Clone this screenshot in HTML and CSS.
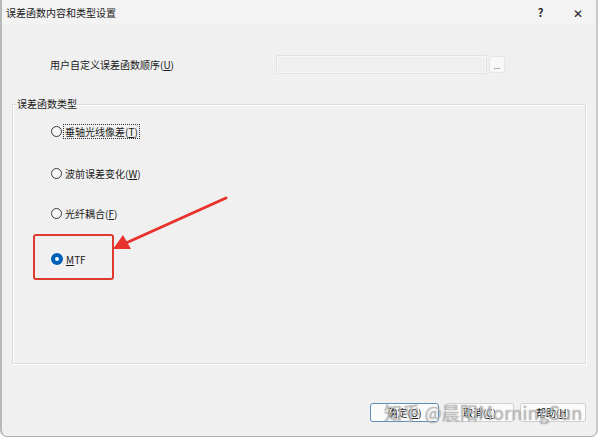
FILE: index.html
```html
<!DOCTYPE html>
<html lang="zh">
<head>
<meta charset="utf-8">
<link rel="stylesheet" href="styles.css">
</head>
<body>
<div class="window">
  <div class="titlebar">
    <span class="title">误差函数内容和类型设置</span>
    <span class="tb-btn help">?</span>
    <span class="tb-btn close">✕</span>
  </div>
  <div class="content">
    <div class="order-row">
      <span class="order-label">用户自定义误差函数顺序(<u>U</u>)</span>
      <span class="order-input"></span>
      <span class="dots-btn">...</span>
    </div>
    <fieldset class="group">
      <legend class="group-label">误差函数类型</legend>
      <div class="radio-list">
        <div class="radio-item"><span class="radio"></span><span class="radio-text focused">垂轴光线像差(<u>T</u>)</span></div>
        <div class="radio-item"><span class="radio"></span><span class="radio-text">波前误差变化(<u>W</u>)</span></div>
        <div class="radio-item third"><span class="radio"></span><span class="radio-text">光纤耦合(<u>F</u>)</span></div>
        <div class="radio-item last"><span class="radio checked"></span><span class="radio-text"><u>M</u>TF</span></div>
      </div>
    </fieldset>
    <div class="buttons">
      <span class="btn default">确定(<u>O</u>)</span>
      <span class="btn">取消(<u>C</u>)</span>
      <span class="btn">帮助(<u>H</u>)</span>
    </div>
  </div>
</div>
<div class="highlight"></div>
<svg class="arrow" width="600" height="441" viewBox="0 0 600 441">
  <line x1="226" y1="198" x2="126" y2="243" stroke="#e8322d" stroke-width="3" stroke-linecap="round"/>
  <polygon points="113,249 123,235 131,249" fill="#e8322d"/>
</svg>
<div class="watermark">知乎 @晨阳MorningSun</div>
</body>
</html>
```
FILE: styles.css
```css
html, body {
  margin: 0;
  padding: 0;
  width: 600px;
  height: 441px;
  overflow: hidden;
  background: #ffffff;
  font-family: "Noto Sans CJK SC", "Liberation Sans", sans-serif;
  font-size: 10px;
  color: #1a1a1a;
}

.window {
  box-sizing: border-box;
  width: 598px;
  height: 437px;
  background: #f0f0f0;
  border-left: 2px solid #b9b9b9;
  border-right: 2px solid #c8c8c8;
  border-bottom: 1px solid #b0b0b0;
  border-radius: 0 0 7px 7px;
  display: flex;
  flex-direction: column;
}

.titlebar {
  height: 24px;
  display: flex;
  align-items: center;
  background: #f3f3f3;
  padding-left: 4px;
}

.title {
  flex: 1;
  font-size: 10px;
  color: #1a1a1a;
}

.tb-btn {
  width: 37px;
  text-align: center;
  color: #222;
}

.help {
  font-size: 11px;
  font-weight: bold;
}

.close {
  font-size: 12px;
}

.content {
  flex: 1;
  display: flex;
  flex-direction: column;
  padding: 0 10px 0 10px;
}

.order-row {
  margin-top: 31px;
  height: 19px;
  display: flex;
  align-items: center;
}

.order-label {
  margin-left: 38px;
  width: 226px;
}

.order-input {
  box-sizing: border-box;
  width: 211px;
  height: 19px;
  background: #efefef;
  border: 1px solid #e2e2e2;
  box-shadow: inset 0 0 0 1px #f7f7f7;
}

.dots-btn {
  box-sizing: border-box;
  width: 16px;
  height: 17px;
  margin-left: 2px;
  background: #f8f8f8;
  border: 1px solid #e6e6e6;
  border-radius: 2px;
  font-size: 8px;
  line-height: 17px;
  text-align: center;
  color: #555;
}

.group {
  box-sizing: border-box;
  margin: 23px 0 0 0;
  padding: 0;
  width: 574px;
  height: 267px;
  border: 1px solid #dcdcdc;
  box-shadow: 1px 1px 0 #ffffff, inset 1px 1px 0 #ffffff;
}

.group-label {
  padding: 0;
  margin-left: 4px;
  font-size: 10px;
  line-height: 14px;
}

.radio-list {
  display: flex;
  flex-direction: column;
  gap: 26px;
  margin-top: 12px;
  padding-left: 38px;
}

.radio-item {
  height: 16px;
  display: flex;
  align-items: center;
}

.radio-item.third {
  margin-top: -2px;
}

.radio-item.last {
  margin-top: 4px;
}

.radio {
  box-sizing: border-box;
  width: 11px;
  height: 11px;
  border: 1px solid #3c3c3c;
  border-radius: 50%;
  background: #f6f6f6;
  margin-right: 1px;
}

.radio.checked {
  width: 12px;
  height: 12px;
  border: 4px solid #005fb8;
  background: #ffffff;
}

.radio-text {
  padding: 0 1px;
  border: 1px dotted transparent;
  line-height: 13px;
}

.radio-text.focused {
  border-color: #333;
}

.buttons {
  margin-top: 39px;
  display: flex;
  justify-content: flex-end;
  gap: 6px;
}

.btn {
  box-sizing: border-box;
  width: 69px;
  height: 19px;
  background: #fbfbfb;
  border: 1px solid #d0d0d0;
  border-radius: 3px;
  font-size: 10px;
  line-height: 17px;
  text-align: center;
  color: #222;
}

.btn:last-child {
  width: 66px;
}

.btn.default {
  border: 1px solid #5f8fb8;
  box-shadow: inset 0 0 0 1px #ffffff;
}

.highlight {
  position: absolute;
  left: 33px;
  top: 234px;
  width: 77px;
  height: 42px;
  border: 2px solid #e03a30;
  border-radius: 3px;
}

.arrow {
  position: absolute;
  left: 0;
  top: 0;
}

.watermark {
  position: absolute;
  left: 384px;
  top: 399px;
  font-size: 18px;
  letter-spacing: 0.2px;
  color: rgba(255, 255, 255, 0.5);
  text-shadow: 0 0 1px rgba(90, 90, 90, 0.9);
  white-space: nowrap;
}
```
